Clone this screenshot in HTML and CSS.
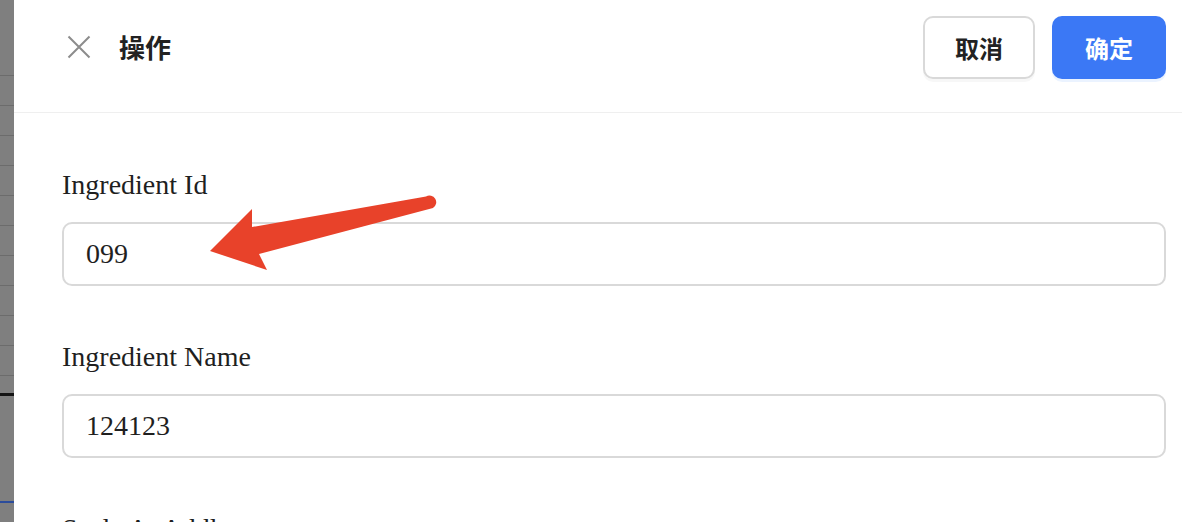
FILE: index.html
```html
<!DOCTYPE html>
<html lang="zh-CN">
<head>
    <meta charset="UTF-8">
    <meta name="viewport" content="width=device-width, initial-scale=1.0">
    <title>操作</title>
    <link rel="stylesheet" href="styles.css">
</head>
<body>
    <div class="mask-strip"></div>

    <aside class="drawer">
        <header class="drawer-header">
            <button class="close-btn" aria-label="关闭">
                <svg viewBox="0 0 24 24" width="24" height="24">
                    <path d="M1.5 1.5 L22.5 22.5 M22.5 1.5 L1.5 22.5" stroke="#8c8c8c" stroke-width="2" fill="none"/>
                </svg>
            </button>
            <h1 class="drawer-title">操作</h1>
            <div class="actions">
                <button class="btn btn-default">取消</button>
                <button class="btn btn-primary">确定</button>
            </div>
        </header>

        <form class="drawer-body">
            <div class="form-item">
                <label>Ingredient Id</label>
                <input type="text" value="099">
            </div>
            <div class="form-item">
                <label>Ingredient Name</label>
                <input type="text" value="124123">
            </div>
            <div class="form-item">
                <label>Scale At Addl</label>
                <input type="text" value="">
            </div>
        </form>

        <!-- annotation arrow drawn over the screenshot -->
        <svg class="annotation" viewBox="14 0 1168 522" width="1168" height="522">
            <path d="M252 227 L426 196.5 A6 6 0 0 1 433 208 L259 254 L267 270 L210 251 L252 209 Z" fill="#e8422a"/>
        </svg>
    </aside>
</body>
</html>
```

FILE: styles.css
```css
body {
    margin: 0;
    padding: 0;
    display: flex;
    height: 100vh;
    overflow: hidden;
    font-family: "Liberation Serif", serif;
    background: #fff;
}
.mask-strip {
    width: 14px;
    flex-shrink: 0;
    background:
        linear-gradient(to bottom, transparent 393px, #141414 393px, #141414 396px, transparent 396px),
        linear-gradient(to bottom, transparent 501px, #2b4c9b 501px, #2b4c9b 503px, transparent 503px),
        repeating-linear-gradient(to bottom, transparent 0, transparent 29px, #6c6c6c 29px, #6c6c6c 30px) 0 46px / 100% 330px no-repeat,
        #7f7f7f;
}
.drawer {
    flex: 1;
    position: relative;
    background: #fff;
}
.drawer-header {
    height: 96px;
    padding: 16px 16px 0 53px;
    border-bottom: 1px solid #efefef;
    display: flex;
    align-items: flex-start;
}
.close-btn {
    width: 24px;
    height: 63px;
    padding: 0;
    border: none;
    background: none;
    display: flex;
    align-items: center;
    margin-right: 28px;
    margin-top: -1px;
}
.close-btn svg {
    width: 24px;
    height: 24px;
}
.drawer-title {
    margin: 0;
    line-height: 62px;
    font-size: 26px;
    font-weight: 700;
    color: #222;
    font-family: "Noto Sans CJK SC", sans-serif;
}
.actions {
    margin-left: auto;
    display: flex;
    gap: 17px;
}
.btn {
    height: 63px;
    padding: 0 30px;
    border-radius: 10px;
    font-size: 24px;
    font-weight: 700;
    font-family: "Noto Sans CJK SC", sans-serif;
    cursor: pointer;
}
.btn-default {
    width: 112px;
    background: #fff;
    color: #222;
    border: 2px solid #d9d9d9;
    box-shadow: 0 3px 0 rgba(0, 0, 0, 0.03);
}
.btn-primary {
    width: 114px;
    background: #3b78f5;
    color: #fff;
    border: none;
    box-shadow: 0 3px 0 rgba(5, 100, 255, 0.08);
}
.drawer-body {
    padding: 56px 16px 0 48px;
}
.form-item {
    margin-bottom: 55px;
}
.form-item label {
    display: block;
    font-size: 28px;
    line-height: 31px;
    color: #1f1f1f;
    margin-bottom: 22px;
}
.form-item input {
    display: block;
    width: 100%;
    box-sizing: border-box;
    height: 64px;
    padding: 0 22px;
    border: 2px solid #d9d9d9;
    border-radius: 10px;
    font-family: "Liberation Serif", serif;
    font-size: 28px;
    color: #1f1f1f;
    outline: none;
}
.annotation {
    position: absolute;
    top: 0;
    left: 0;
    pointer-events: none;
}
```
